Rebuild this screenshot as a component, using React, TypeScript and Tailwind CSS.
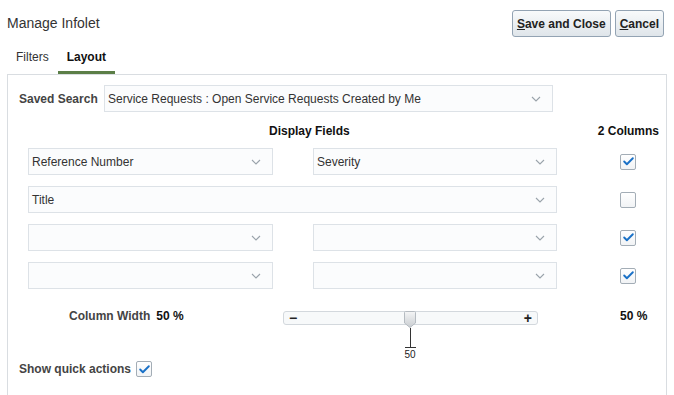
import { Check } from "lucide-react";

const Chevron = () => (
  <svg width="10" height="6" viewBox="0 0 10 6" className="shrink-0">
    <path d="M1 1 L5 5 L9 1" fill="none" stroke="#9aa3ab" strokeWidth="1.1" />
  </svg>
);

const SelectBox = ({ value = "", width }: { value?: string; width: string }) => (
  <div
    className={`${width} h-[27px] flex items-center justify-between pl-[3px] pr-[11px] border border-[#dde2e7] bg-[#fbfcfd] text-[12px] text-[#333]`}
  >
    <span>{value}</span>
    <Chevron />
  </div>
);

const CheckBox = ({ checked }: { checked: boolean }) => (
  <div className="w-[16px] h-[16px] rounded-[2px] border border-[#a3adb6] bg-gradient-to-b from-white to-[#f1f3f5] flex items-center justify-center">
    {checked && <Check size={13} strokeWidth={3.5} color="#1a71c7" />}
  </div>
);

const FieldRow = ({ left, right, checked }: { left?: string; right?: string; checked: boolean }) => (
  <div className="flex items-center pl-[20px]">
    <SelectBox value={left} width="w-[245px]" />
    <div className="w-[40px]" />
    <SelectBox value={right} width="w-[244px]" />
    <div className="w-[63px]" />
    <CheckBox checked={checked} />
  </div>
);

const Btn = ({ first, rest }: { first: string; rest: string }) => (
  <button className="h-[27px] px-[4px] rounded-[3px] border border-[#93a3b3] bg-gradient-to-b from-[#f8fafb] to-[#dfe5ea] text-[12px] font-bold text-[#222]">
    <span className="underline">{first}</span>
    {rest}
  </button>
);

export default function App() {
  return (
    <div className="w-[674px] h-[395px] overflow-hidden bg-white font-['Liberation_Sans',Arial,sans-serif] text-[#333]">
      <div className="flex items-center justify-between pl-[7px] pr-[10px] pt-[10px]">
        <span className="text-[14px] text-[#333]">Manage Infolet</span>
        <div className="flex gap-[4px]">
          <Btn first="S" rest="ave and Close" />
          <Btn first="C" rest="ancel" />
        </div>
      </div>

      <div className="flex pl-[7px] text-[12px] leading-[14px]">
        <div className="px-[9px] pt-[13px] pb-[7px] border-b-[3px] border-transparent text-[#333]">Filters</div>
        <div className="px-[9px] pt-[13px] pb-[7px] border-b-[3px] border-[#5b7e47] font-bold text-[#111]">Layout</div>
      </div>

      <div className="ml-[7px] w-[660px] border border-[#d9dde1] pb-[40px]">
        <div className="flex items-center pl-[11px] mt-[10px]">
          <span className="w-[85px] text-[12px] font-bold text-[#444]">Saved Search</span>
          <SelectBox value="Service Requests : Open Service Requests Created by Me" width="w-[449px]" />
        </div>

        <div className="flex mt-[12px] mb-[10px] text-[12px] leading-[14px] font-bold text-[#111]">
          <span className="ml-[261px]">Display Fields</span>
          <span className="ml-[248px]">2 Columns</span>
        </div>

        <div className="flex flex-col gap-[11px]">
          <FieldRow left="Reference Number" right="Severity" checked />
          <div className="flex items-center pl-[20px]">
            <SelectBox value="Title" width="w-[529px]" />
            <div className="w-[63px]" />
            <CheckBox checked={false} />
          </div>
          <FieldRow checked />
          <FieldRow checked />
        </div>

        <div className="flex items-start mt-[20px] text-[12px] leading-[14px] font-bold">
          <div className="w-[275px] flex pl-[61px]">
            <span className="text-[#444]">Column Width</span>
            <span className="ml-[6px] text-[#111]">50 %</span>
          </div>
          <div className="relative mt-[2px] w-[255px] h-[14px] rounded-[3px] border border-[#d3d8dd] bg-[#f7f9fa] flex items-center justify-between px-[5px] text-[#222]">
            <span className="text-[14px] leading-[10px]">−</span>
            <span className="text-[14px] leading-[10px]">+</span>
            <div className="absolute left-[120px] -top-[1px] flex flex-col items-center">
              <svg width="12" height="17" viewBox="0 0 12 17">
                <defs>
                  <linearGradient id="th" x1="0" y1="0" x2="0" y2="1">
                    <stop offset="0" stopColor="#f4f5f6" />
                    <stop offset="1" stopColor="#c9cdd1" />
                  </linearGradient>
                </defs>
                <path d="M0.5 1.5 Q0.5 0.5 1.5 0.5 L10.5 0.5 Q11.5 0.5 11.5 1.5 L11.5 12 L6 16.5 L0.5 12 Z" fill="url(#th)" stroke="#b5bbc1" />
              </svg>
              <div className="w-px h-[19px] bg-[#333]" />
              <div className="w-[11px] h-px bg-[#333]" />
              <span className="mt-[1px] text-[10px] leading-[12px] font-normal text-[#222]">50</span>
            </div>
          </div>
          <span className="ml-[82px] text-[#111]">50 %</span>
        </div>

        <div className="flex items-center pl-[11px] mt-[35px]">
          <span className="w-[117px] text-[12px] font-bold text-[#444] whitespace-nowrap">Show quick actions</span>
          <CheckBox checked />
        </div>
      </div>
    </div>
  );
}
